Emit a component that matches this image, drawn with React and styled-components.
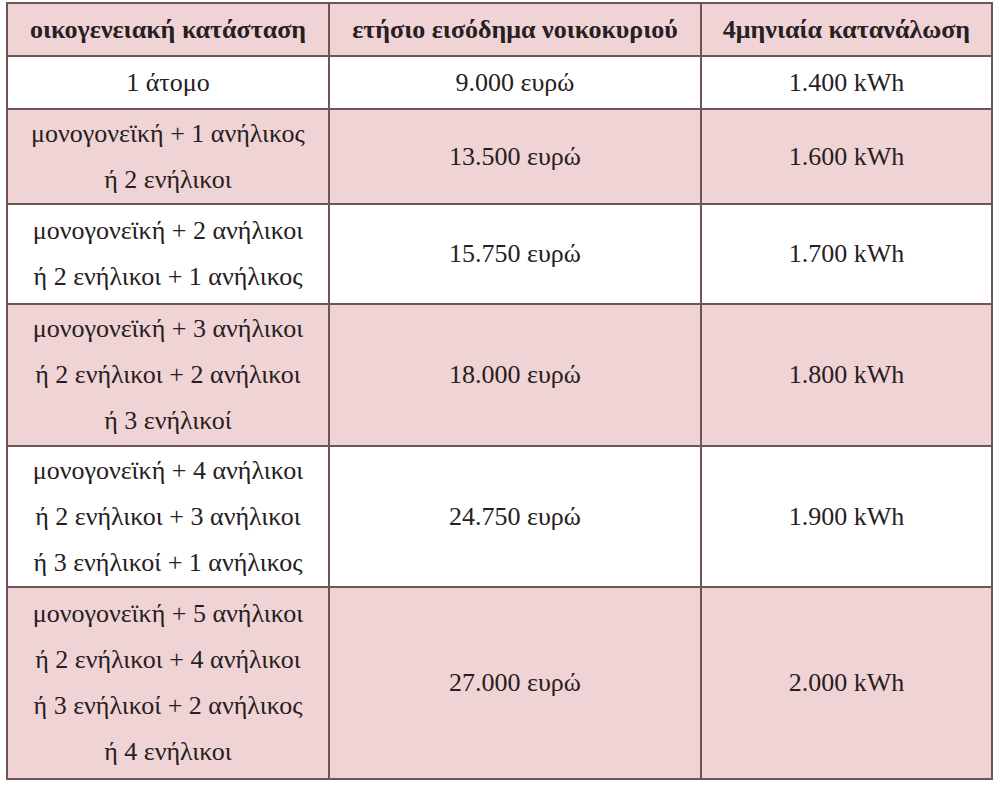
import React from "react";
import styled, { createGlobalStyle } from "styled-components";

const INK = "#262022";
const LINE = "#6e5658";
const PINK = "#f0d3d4";

const Global = createGlobalStyle`
  html, body { margin: 0; padding: 0; background: #ffffff; }
  body { font-family: "Liberation Serif", serif !important; }
`;

const Page = styled.div`
  padding: 2px 0 0 6px;
  width: 1000px;
  height: 787px;
  box-sizing: border-box;
  color: ${INK};
  font-family: "Liberation Serif", serif !important;
`;

const Grid = styled.div`
  display: flex;
  flex-direction: column;
  width: 987px;
  border-left: 2px solid ${LINE};
  border-top: 2px solid ${LINE};
  box-sizing: border-box;
`;

const Row = styled.div`
  display: grid;
  grid-template-columns: 322px 372px 291px;
  height: ${(p) => p.$h}px;
  background: ${(p) => (p.$shaded ? PINK : "#ffffff")};
`;

const Cell = styled.div`
  display: flex;
  flex-direction: column;
  align-items: center;
  justify-content: center;
  box-sizing: border-box;
  border-right: 2px solid ${LINE};
  border-bottom: 2px solid ${LINE};
  text-align: center;
  white-space: nowrap;
`;

const Text = styled.div`
  font-family: "Liberation Serif", serif !important;
  font-size: 26px;
  font-weight: ${(p) => (p.$head ? 700 : 400)};
  line-height: ${(p) => (p.$head ? 30 : 46)}px;
`;

const rows = [
  { h: 53, lines: ["1 άτομο"], income: "9.000 ευρώ", kwh: "1.400 kWh" },
  { h: 95, lines: ["μονογονεϊκή + 1 ανήλικος", "ή 2 ενήλικοι"], income: "13.500 ευρώ", kwh: "1.600 kWh" },
  { h: 100, lines: ["μονογονεϊκή + 2 ανήλικοι", "ή 2 ενήλικοι + 1 ανήλικος"], income: "15.750 ευρώ", kwh: "1.700 kWh" },
  { h: 142, lines: ["μονογονεϊκή + 3 ανήλικοι", "ή 2 ενήλικοι + 2 ανήλικοι", "ή 3 ενήλικοί"], income: "18.000 ευρώ", kwh: "1.800 kWh" },
  { h: 141, lines: ["μονογονεϊκή + 4 ανήλικοι", "ή 2 ενήλικοι + 3 ανήλικοι", "ή 3 ενήλικοί + 1 ανήλικος"], income: "24.750 ευρώ", kwh: "1.900 kWh" },
  { h: 192, lines: ["μονογονεϊκή + 5 ανήλικοι", "ή 2 ενήλικοι + 4 ανήλικοι", "ή 3 ενήλικοί + 2 ανήλικος", "ή 4 ενήλικοι"], income: "27.000 ευρώ", kwh: "2.000 kWh" },
];

const headers = ["οικογενειακή κατάσταση", "ετήσιο εισόδημα νοικοκυριού", "4μηνιαία κατανάλωση"];

export default function App() {
  return (
    <Page>
      <Global />
      <Grid>
        <Row $h={53} $shaded>
          {headers.map((h) => (
            <Cell key={h}>
              <Text $head>{h}</Text>
            </Cell>
          ))}
        </Row>
        {rows.map((r, i) => (
          <Row key={i} $h={r.h} $shaded={i % 2 === 1}>
            <Cell>
              {r.lines.map((l, j) => (
                <Text key={j}>{l}</Text>
              ))}
            </Cell>
            <Cell>
              <Text>{r.income}</Text>
            </Cell>
            <Cell>
              <Text>{r.kwh}</Text>
            </Cell>
          </Row>
        ))}
      </Grid>
    </Page>
  );
}
